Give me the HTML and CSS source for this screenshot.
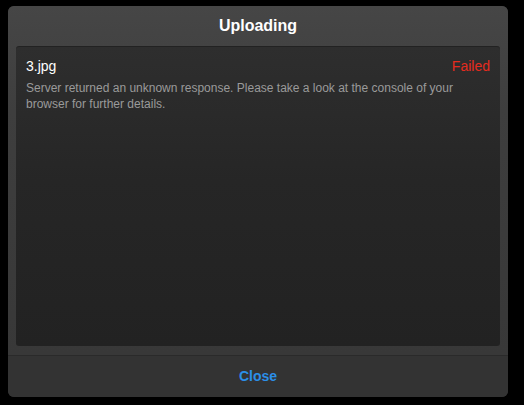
FILE: index.html
```html
<!DOCTYPE html>
<html>
<head>
<meta charset="utf-8">
<link rel="stylesheet" href="styles.css">
</head>
<body>
<div class="dialog">
  <div class="dialog-body">
    <h1 class="title">Uploading</h1>
    <div class="panel">
      <div class="file-row">
        <span class="file-name">3.jpg</span>
        <span class="status-failed">Failed</span>
      </div>
      <p class="message">Server returned an unknown response. Please take a look at the console of your browser for further details.</p>
    </div>
  </div>
  <div class="dialog-footer">
    <span class="close-btn">Close</span>
  </div>
</div>
</body>
</html>
```
FILE: styles.css
```css
html, body {
  margin: 0;
  padding: 0;
  background: #000;
  font-family: "Liberation Sans", Arial, sans-serif;
}
body {
  padding: 6px 16px 8px 8px;
}
.dialog {
  width: 500px;
  height: 391px;
  border-radius: 6px;
  overflow: hidden;
  display: flex;
  flex-direction: column;
  background: #333;
}
.dialog-body {
  flex: 1;
  display: flex;
  flex-direction: column;
  padding: 0 8px 9px 8px;
  background: linear-gradient(to bottom, #464646 0%, #3e3e3e 30%, #383838 100%);
}
.title {
  margin: 0;
  height: 40px;
  line-height: 39px;
  text-align: center;
  font-size: 16px;
  font-weight: bold;
  color: #fff;
}
.panel {
  flex: 1;
  border-radius: 3px;
  background: linear-gradient(to bottom, #2e2e2e 0%, #262626 45%, #222 100%);
  box-shadow: inset 0 1px 0 rgba(0,0,0,0.25);
  padding: 11px 10px 10px 10px;
}
.file-row {
  display: flex;
  justify-content: space-between;
  align-items: baseline;
  font-size: 14px;
  line-height: 18px;
}
.file-name {
  color: #fff;
}
.status-failed {
  color: #e52b1e;
}
.message {
  margin: 5px 0 0 0;
  font-size: 12px;
  line-height: 16px;
  color: #9a9a9a;
}
.dialog-footer {
  height: 42px;
  border-top: 1px solid #2a2a2a;
  background: #333;
  display: flex;
  align-items: center;
  justify-content: center;
  padding-bottom: 1px;
  box-sizing: border-box;
}
.close-btn {
  color: #2b8fe8;
  font-size: 14px;
  font-weight: bold;
}
```
